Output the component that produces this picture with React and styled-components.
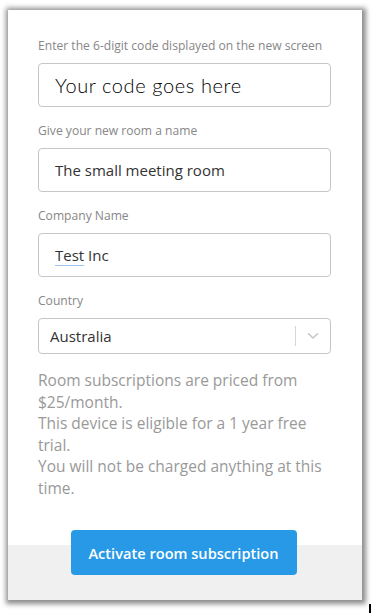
import React from 'react';
import styled, { createGlobalStyle } from 'styled-components';

const GlobalStyle = createGlobalStyle`
  html, body {
    margin: 0;
    padding: 0;
    background: #ffffff;
  }
  body {
    font-family: 'Open Sans', 'Liberation Sans', sans-serif;
  }
`;

const Page = styled.div`
  position: relative;
  width: 372px;
  height: 615px;
  padding: 10px 0 0 8px;
  box-sizing: border-box;
`;

const Card = styled.div`
  width: 354px;
  height: 590px;
  background: #ffffff;
  box-shadow: 1px 1px 5px 3px rgba(0, 0, 0, 0.45);
  display: flex;
  flex-direction: column;
`;

const Form = styled.div`
  flex: 1;
  padding: 28px 31px 0 30px;
  display: flex;
  flex-direction: column;
`;

const Field = styled.div`
  display: flex;
  flex-direction: column;
  margin-bottom: 16px;
`;

const Label = styled.label`
  font-size: 12.1px;
  line-height: 16px;
  color: #878787;
  margin-bottom: 9px;
  white-space: nowrap;
`;

const InputBox = styled.div`
  height: ${p => (p.$short ? '36px' : '44px')};
  box-sizing: border-box;
  border: 1.5px solid #c6c6c6;
  border-radius: 4px;
  display: flex;
  align-items: center;
  padding-left: ${p => (p.$short ? '11px' : '16px')};
  font-size: ${p => (p.$big ? '20px' : '15px')};
  font-family: ${p => (p.$big ? "Lato, 'Noto Sans', sans-serif" : "'Open Sans', 'Liberation Sans', sans-serif")};
  font-weight: ${p => (p.$big ? 300 : 400)};
  letter-spacing: ${p => (p.$big ? '0.6px' : '0')};
  color: ${p => (p.$big ? '#000000' : '#333333')};
`;

const Spell = styled.span`
  text-decoration: underline;
  text-decoration-color: #9cc3ee;
  text-underline-offset: 4px;
`;

const SelectValue = styled.span`
  flex: 1;
`;

const Separator = styled.span`
  width: 1px;
  height: 20px;
  background: #d6d6d6;
`;

const Chevron = styled.span`
  width: 34px;
  display: flex;
  justify-content: center;
  align-items: center;
`;

const Help = styled.p`
  margin: 0;
  font-size: 15.5px;
  line-height: 21.6px;
  color: #999999;
`;

const Footer = styled.div`
  height: 55px;
  background: #f0f0f0;
  display: flex;
  justify-content: center;
  align-items: flex-start;
`;

const Button = styled.button`
  margin-top: -15px;
  margin-left: -3px;
  width: 226px;
  height: 45px;
  border: none;
  border-radius: 4px;
  background: #2799e6;
  color: #ffffff;
  font-family: 'Open Sans', 'Liberation Sans', sans-serif;
  font-size: 14.6px;
  font-weight: 600;
  cursor: pointer;
`;

const Caret = styled.span`
  position: absolute;
  left: 369px;
  top: 604px;
  width: 2px;
  height: 9px;
  background: #000;
`;

export default function App() {
  return (
    <Page>
      <GlobalStyle />
      <Card>
        <Form>
          <Field>
            <Label>Enter the 6-digit code displayed on the new screen</Label>
            <InputBox $big>Your code goes here</InputBox>
          </Field>
          <Field>
            <Label>Give your new room a name</Label>
            <InputBox>The small meeting room</InputBox>
          </Field>
          <Field>
            <Label>Company Name</Label>
            <InputBox>
              <Spell>Test</Spell>&nbsp;Inc
            </InputBox>
          </Field>
          <Field>
            <Label>Country</Label>
            <InputBox $short>
              <SelectValue>Australia</SelectValue>
              <Separator />
              <Chevron>
                <svg width="12" height="8" viewBox="0 0 12 8" fill="none">
                  <path d="M1.5 1.8 L6 6 L10.5 1.8" stroke="#c4c4c4" strokeWidth="1.5" strokeLinecap="round" strokeLinejoin="round" />
                </svg>
              </Chevron>
            </InputBox>
          </Field>
          <Help>
            Room subscriptions are priced from $25/month.
            <br />
            This device is eligible for a 1 year free trial.
            <br />
            You will not be charged anything at this time.
          </Help>
        </Form>
        <Footer>
          <Button>Activate room subscription</Button>
        </Footer>
      </Card>
      <Caret />
    </Page>
  );
}
